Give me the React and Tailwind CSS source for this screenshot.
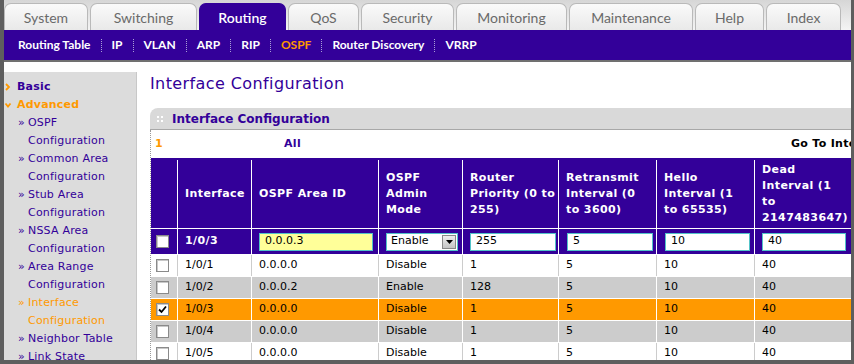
import React from "react";

const tabs = [
  { label: "System", w: "w-[84px]" },
  { label: "Switching", w: "w-[107px]" },
  { label: "Routing", w: "w-[87px]", active: true },
  { label: "QoS", w: "w-[71px]" },
  { label: "Security", w: "w-[93px]" },
  { label: "Monitoring", w: "w-[111px]" },
  { label: "Maintenance", w: "w-[124px]" },
  { label: "Help", w: "w-[69px]" },
  { label: "Index", w: "w-[75px]" },
];

const subnav = ["Routing Table", "IP", "VLAN", "ARP", "RIP", "OSPF", "Router Discovery", "VRRP"];

const menu = [
  { text: "OSPF", sub: true },
  { text: "Configuration" },
  { text: "Common Area", sub: true },
  { text: "Configuration" },
  { text: "Stub Area", sub: true },
  { text: "Configuration" },
  { text: "NSSA Area", sub: true },
  { text: "Configuration" },
  { text: "Area Range", sub: true },
  { text: "Configuration" },
  { text: "Interface", sub: true, active: true },
  { text: "Configuration", active: true },
  { text: "Neighbor Table", sub: true },
  { text: "Link State", sub: true },
];

const rows = [
  { intf: "1/0/1", area: "0.0.0.0", mode: "Disable", prio: "1", bg: "white" },
  { intf: "1/0/2", area: "0.0.0.2", mode: "Enable", prio: "128", bg: "gray" },
  { intf: "1/0/3", area: "0.0.0.0", mode: "Disable", prio: "1", bg: "orange", checked: true },
  { intf: "1/0/4", area: "0.0.0.0", mode: "Disable", prio: "1", bg: "gray" },
  { intf: "1/0/5", area: "0.0.0.0", mode: "Disable", prio: "1", bg: "white" },
];

const widths = ["w-[27px]", "w-[74px]", "w-[127px]", "w-[84px]", "w-[96px]", "w-[98px]", "w-[98px]", "w-[98px]"];

// header label + right padding so lines wrap as on the device page
const headers = [
  { t: "", pr: "pr-[1px]" },
  { t: "Interface", pr: "pr-[1px]" },
  { t: "OSPF Area ID", pr: "pr-[1px]" },
  { t: "OSPF Admin Mode", pr: "pr-[1px]" },
  { t: "Router Priority (0 to 255)", pr: "pr-[1px]" },
  { t: "Retransmit Interval (0 to 3600)", pr: "pr-[8px]" },
  { t: "Hello Interval (1 to 65535)", pr: "pr-[8px]" },
  { t: "Dead Interval (1 to 2147483647)", pr: "pr-[8px]" },
];

const Checkbox = ({ checked }) => (
  <span className="flex h-[13px] w-[13px] items-center justify-center border border-[#8a8a8a] bg-white shadow-[inset_1px_1px_0_#c8c8c8]">
    {checked && (
      <svg width="9" height="9" viewBox="0 0 9 9">
        <path d="M1 4.5 L3.5 7 L8 1.5" fill="none" stroke="#000" strokeWidth="1.8" />
      </svg>
    )}
  </span>
);

const Field = ({ value, w, yellow }) => (
  <span
    className={`flex h-[18px] items-center border border-[#52c3c8] pl-[5px] text-[11px] text-black ${w} ${
      yellow ? "bg-[#ffff99]" : "bg-white"
    }`}
  >
    {value}
  </span>
);

const App = () => {
  return (
    <div
      className="flex h-[364px] w-[854px] flex-col overflow-hidden border-b-[4px] border-l-[4px] border-r-[3px] border-[#5e5e5e] bg-white"
      style={{ fontFamily: '"DejaVu Sans", Verdana, sans-serif' }}
    >
      {/* top tabs */}
      <div
        className="flex h-[30px] shrink-0 items-end gap-[2px] bg-gradient-to-b from-[#d6d6d6] to-[#f4f4f4]"
        style={{ fontFamily: "Lato, 'Open Sans', sans-serif" }}
      >
        {tabs.map((t) => (
          <div
            key={t.label}
            className={`flex h-[27px] shrink-0 items-center justify-center rounded-t-[7px] border border-b-0 text-[14px] ${t.w} ${
              t.active
                ? "border-[#330099] bg-[#330099] font-semibold text-white"
                : "border-[#b9b9b9] bg-gradient-to-b from-[#fafafa] to-[#e9e9e9] text-[#6a6a6a]"
            }`}
          >
            {t.label}
          </div>
        ))}
      </div>

      {/* sub navigation */}
      <div
        className="flex h-[30px] shrink-0 items-center bg-[#330099] pl-[14px] text-[12px] font-bold text-white"
        style={{ fontFamily: "Lato, 'Open Sans', sans-serif" }}
      >
        {subnav.map((s, i) => (
          <React.Fragment key={s}>
            {i > 0 && <span className="mx-[10px] h-[13px] border-l border-dotted border-[#a99fd6]" />}
            <span className={s === "OSPF" ? "text-[#ff9900]" : ""}>{s}</span>
          </React.Fragment>
        ))}
      </div>
      <div className="h-[2px] shrink-0 bg-[#707070]" />

      <div className="flex min-h-0 flex-1">
        {/* sidebar */}
        <div className="mt-[10px] w-[133px] shrink-0 border-r border-[#c8c8c8] bg-[#dcdcdc] pt-[6px] text-[11px] leading-[18px] tracking-[0.2px] text-[#330099]">
          <div className="flex items-center font-bold">
            <svg width="13" height="18" viewBox="0 0 13 18" className="shrink-0">
              <path d="M2 6 L5 9 L2 12" fill="none" stroke="#ff9900" strokeWidth="1.8" />
            </svg>
            <span>Basic</span>
          </div>
          <div className="flex items-center font-bold text-[#ff9900]">
            <svg width="13" height="18" viewBox="0 0 13 18" className="shrink-0">
              <path d="M1.5 7.5 L4 10.5 L6.5 7.5" fill="none" stroke="#ff9900" strokeWidth="1.8" />
            </svg>
            <span>Advanced</span>
          </div>
          {menu.map((m, i) => (
            <div key={i} className={`flex whitespace-nowrap ${m.active ? "text-[#ff9900]" : ""}`}>
              <span className="w-[24px] shrink-0 pl-[14px]">{m.sub ? "»" : ""}</span>
              <span>{m.text}</span>
            </div>
          ))}
        </div>

        {/* main */}
        <div className="min-w-0 flex-1 overflow-hidden pl-[13px]">
          <h1 className="mt-[12px] whitespace-nowrap text-[16px] leading-[20px] tracking-[0.4px] text-[#330099]">
            Interface Configuration
          </h1>

          <div className="mt-[14px] flex h-[22px] items-center rounded-tl-[8px] border-b border-[#a8a8a8] bg-[#d9d9d9] pl-[7px]">
            <span className="mr-[9px] grid grid-cols-2 gap-[2px]">
              <span className="h-[2px] w-[2px] bg-white" />
              <span className="h-[2px] w-[2px] bg-white" />
              <span className="h-[2px] w-[2px] bg-white" />
              <span className="h-[2px] w-[2px] bg-white" />
            </span>
            <span className="text-[12px] font-bold text-[#330099]">Interface Configuration</span>
          </div>

          <div className="border-l border-dotted border-[#9a9a9a]">
            <div className="flex h-[28px] items-center whitespace-nowrap text-[11px] font-bold tracking-[0.3px]">
              <span className="w-[133px] shrink-0 pl-[4px] text-[#ff9900]">1</span>
              <span className="w-[507px] shrink-0 text-[#330099]">All</span>
              <span className="shrink-0 text-black">Go To Interface</span>
            </div>

            <div className="w-[714px] text-[11px]">
              {/* header row */}
              <div className="flex h-[70px] bg-[#330099] pt-[2px] font-bold leading-[16px] tracking-[0.4px] text-white">
                {headers.map((h, i) => (
                  <div key={i} className={`flex shrink-0 items-center border-r border-white pl-[7px] ${h.pr} ${widths[i]}`}>
                    {h.t}
                  </div>
                ))}
              </div>

              {/* edit row */}
              <div className="flex h-[26px] border-t border-white bg-[#330099] text-white">
                <div className={`flex shrink-0 items-center border-r border-white pl-[5px] ${widths[0]}`}>
                  <Checkbox />
                </div>
                <div className={`flex shrink-0 items-center border-r border-white pl-[7px] font-bold tracking-[0.4px] ${widths[1]}`}>
                  1/0/3
                </div>
                <div className={`flex shrink-0 items-center border-r border-white pl-[7px] ${widths[2]}`}>
                  <Field value="0.0.0.3" w="w-[114px]" yellow />
                </div>
                <div className={`flex shrink-0 items-center border-r border-white pl-[7px] ${widths[3]}`}>
                  <span className="flex h-[18px] w-[72px] items-center justify-between border border-[#52c3c8] bg-white pl-[4px] pr-[1px] text-black">
                    Enable
                    <span className="flex h-[14px] w-[14px] items-center justify-center border border-[#888] bg-gradient-to-b from-[#eee] to-[#c4c4c4]">
                      <svg width="7" height="4" viewBox="0 0 7 4">
                        <path d="M0 0 H7 L3.5 4 Z" fill="#000" />
                      </svg>
                    </span>
                  </span>
                </div>
                <div className={`flex shrink-0 items-center border-r border-white pl-[7px] ${widths[4]}`}>
                  <Field value="255" w="w-[86px]" />
                </div>
                <div className={`flex shrink-0 items-center border-r border-white pl-[8px] ${widths[5]}`}>
                  <Field value="5" w="w-[86px]" />
                </div>
                <div className={`flex shrink-0 items-center border-r border-white pl-[8px] ${widths[6]}`}>
                  <Field value="10" w="w-[85px]" />
                </div>
                <div className={`flex shrink-0 items-center pl-[7px] ${widths[7]}`}>
                  <Field value="40" w="w-[84px]" />
                </div>
              </div>

              {/* data rows */}
              {rows.map((r) => {
                const bg = r.bg === "white" ? "bg-white" : r.bg === "gray" ? "bg-[#cccccc]" : "bg-[#ff9900]";
                const line = r.bg === "white" ? "border-[#cccccc]" : "border-white";
                const cells = [r.intf, r.area, r.mode, r.prio, "5", "10", "40"];
                return (
                  <div key={r.intf} className={`flex h-[22px] border-t border-white text-black ${bg}`}>
                    <div className={`flex shrink-0 items-center border-r pl-[5px] ${line} ${widths[0]}`}>
                      <Checkbox checked={r.checked} />
                    </div>
                    {cells.map((c, i) => (
                      <div key={i} className={`flex shrink-0 items-center border-r pl-[7px] ${line} ${widths[i + 1]}`}>
                        {c}
                      </div>
                    ))}
                  </div>
                );
              })}
            </div>
          </div>
        </div>
      </div>
    </div>
  );
};

export default App;
